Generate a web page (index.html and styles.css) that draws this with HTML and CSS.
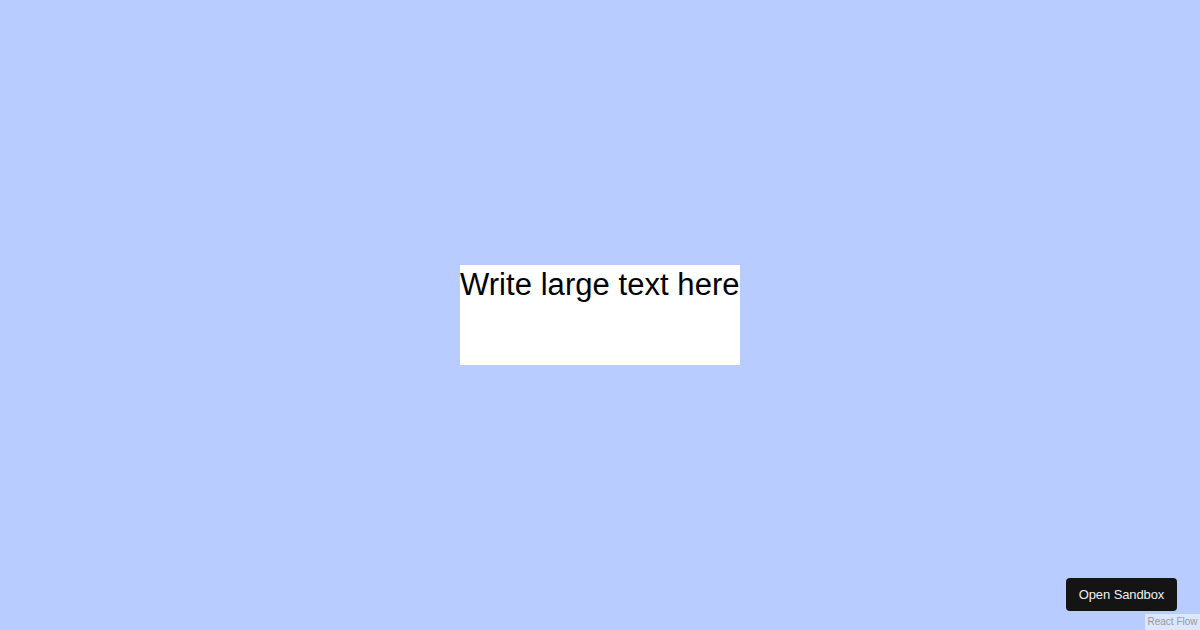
FILE: index.html
```html
<!DOCTYPE html>
<html>
<head>
<meta charset="utf-8">
<link rel="stylesheet" href="styles.css">
</head>
<body>
<div class="flow">
  <div class="node">Write large text here</div>
  <button class="sandbox">Open Sandbox</button>
  <div class="attribution">React Flow</div>
</div>
</body>
</html>
```
FILE: styles.css
```css
html, body {
  margin: 0;
  padding: 0;
  width: 1200px;
  height: 630px;
  overflow: hidden;
}
.flow {
  position: relative;
  width: 1200px;
  height: 630px;
  background: #b8ccff;
  font-family: "Liberation Sans", Arial, sans-serif;
}
.node {
  position: absolute;
  left: 460px;
  top: 265px;
  width: 280px;
  height: 100px;
  background: #fff;
  color: #000;
  font-size: 31px;
  letter-spacing: 0.05px;
  line-height: 40px;
  white-space: nowrap;
  overflow: visible;
}
.sandbox {
  position: absolute;
  left: 1066px;
  top: 578px;
  width: 111px;
  height: 33px;
  background: #141414;
  color: #f0f0f0;
  border: none;
  border-radius: 4px;
  font-family: "Liberation Sans", Arial, sans-serif;
  font-size: 13px;
  letter-spacing: -0.1px;
  padding: 0;
}
.attribution {
  position: absolute;
  right: 0;
  bottom: 0;
  width: 55px;
  height: 16px;
  background: rgba(255, 255, 255, 0.5);
  color: #999;
  font-size: 10px;
  line-height: 16px;
  text-align: center;
}
```
